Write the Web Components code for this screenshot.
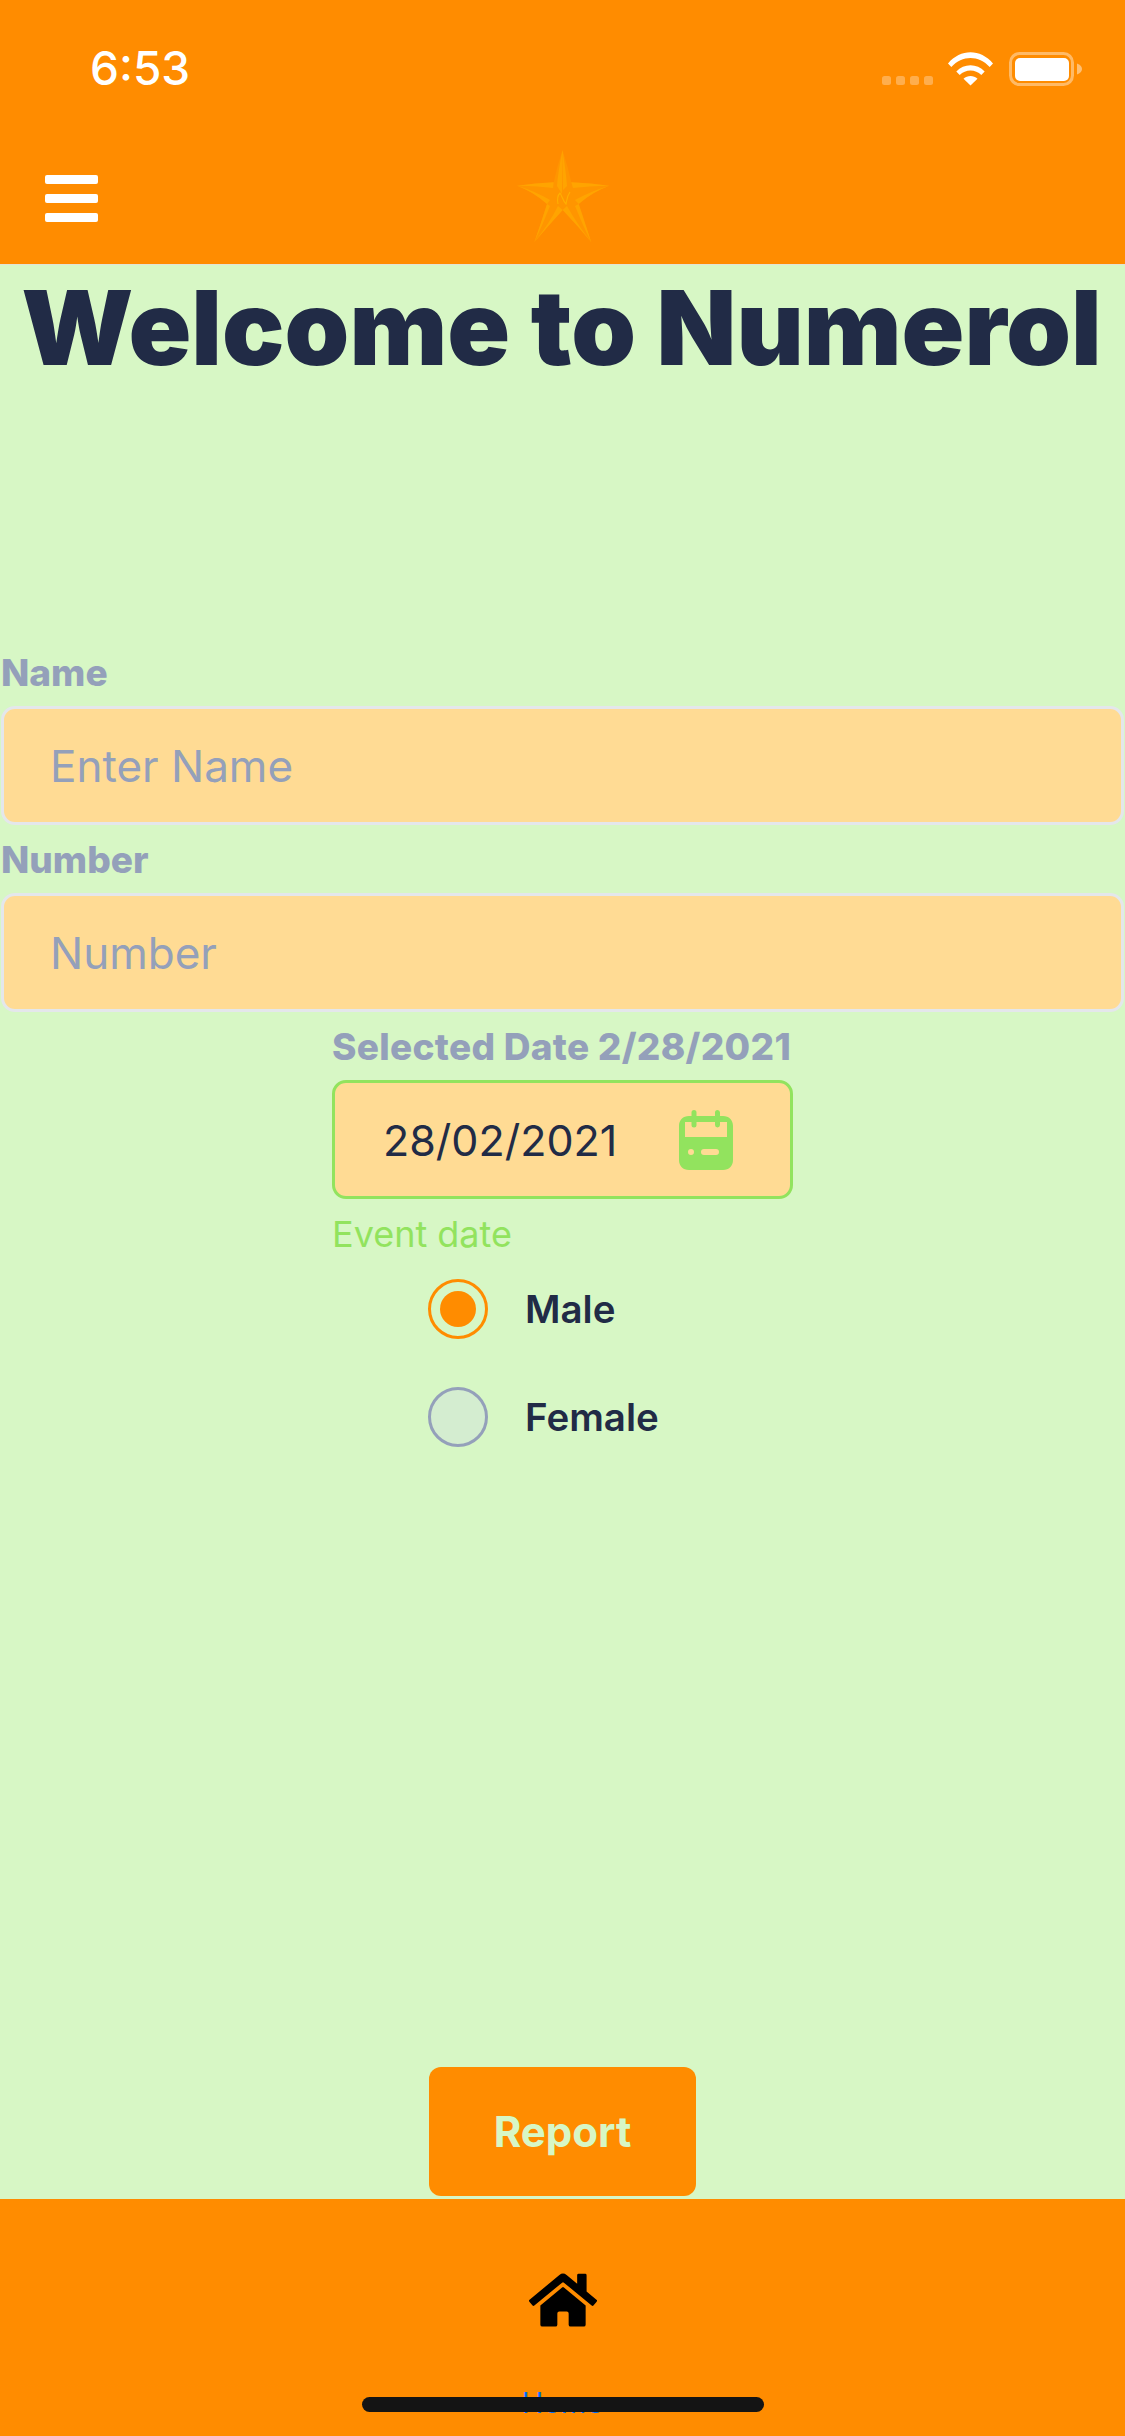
<!DOCTYPE html>
<html>
<head>
<meta charset="utf-8">
<title>Numerology</title>
<style>
	html, body { margin: 0; padding: 0; height: 100%; }
	body { font-family: Inter, "Noto Sans", sans-serif; background: #D7F7C5; }
</style>
</head>
<body>
<app-screen>
	<app-header slot="top">
		<span slot="time">6:53</span>
	</app-header>

	<welcome-title>Welcome to Numerol</welcome-title>

	<text-field>
		<span slot="label">Name</span>
		Enter Name
	</text-field>
	<text-field>
		<span slot="label">Number</span>
		Number
	</text-field>

	<date-field>
		<span slot="selected">Selected Date 2/28/2021</span>
		<span slot="value">28/02/2021</span>
		<span slot="helper">Event date</span>
	</date-field>

	<radio-group>
		<radio-option checked>Male</radio-option>
		<radio-option>Female</radio-option>
	</radio-group>

	<report-button slot="action">Report</report-button>

	<tab-bar slot="bottom">Home</tab-bar>
</app-screen>

<script>
	// page shell
	customElements.define('app-screen', class extends HTMLElement {
		constructor() {
			super();
			this.attachShadow({ mode: 'open' }).innerHTML = `
				<style>
					:host { display: flex; flex-direction: column; height: 2436px; overflow: hidden; }
					main { flex: 1; display: flex; flex-direction: column; min-height: 0; }
					.action { margin-top: auto; display: flex; justify-content: center; padding-bottom: 3px; }
				</style>
				<slot name="top"></slot>
				<main>
					<slot></slot>
					<div class="action"><slot name="action"></slot></div>
				</main>
				<slot name="bottom"></slot>`;
		}
	});

	// status bar + nav
	customElements.define('app-header', class extends HTMLElement {
		constructor() {
			super();
			this.attachShadow({ mode: 'open' }).innerHTML = `
				<style>
					:host { display: block; background: #FF8C00; border-bottom: 1px solid #e3e3d5; color: #fff; }
					.status { height: 132px; box-sizing: border-box; padding: 44px 43px 0 90px; display: flex; justify-content: space-between; align-items: flex-start; }
					.time { font-size: 46px; font-weight: 500; line-height: 48px; }
					.status svg { margin-top: 8px; display: block; }
					nav { height: 132px; display: flex; align-items: center; justify-content: center; position: relative; }
					.menu { position: absolute; left: 45px; top: 43px; display: block; }
					.logo { display: block; margin-top: -2px; }
				</style>
				<div class="status">
					<span class="time"><slot name="time"></slot></span>
					<svg width="200" height="36" viewBox="0 0 200 36">
						<g fill="#fff" fill-opacity=".3">
							<rect x="0" y="24" width="9" height="9" rx="2.5"/>
							<rect x="14" y="24" width="9" height="9" rx="2.5"/>
							<rect x="28" y="24" width="9" height="9" rx="2.5"/>
							<rect x="42" y="24" width="9" height="9" rx="2.5"/>
						</g>
						<path fill="#fff" d="M66 11.500C78.500 -3.500 98.500 -3.500 111 11.500L107.700 15C96.800 3 80.200 3 69.300 15Z"/>
						<path fill="#fff" d="M74.300 19.500C82 11 95 11 102.700 19.500L99.300 23C93.500 17 83.500 17 77.700 23Z"/>
						<path fill="#fff" d="M81.500 26.700C85.500 23 91.500 23 95.500 26.700L88.500 33.500Z"/>
						<rect x="128.500" y="1.500" width="62" height="31" rx="9" fill="none" stroke="#fff" stroke-opacity=".4" stroke-width="3"/>
						<rect x="133" y="6" width="54" height="23" rx="5" fill="#fff"/>
						<path fill="#fff" fill-opacity=".45" d="M195 11.500c3 1 5 3.200 5 5.500s-2 4.500-5 5.500Z"/>
					</svg>
				</div>
				<nav>
					<svg class="menu" width="53" height="47" viewBox="0 0 53 47" fill="#fff">
						<rect y="0" width="53" height="9" rx="2"/>
						<rect y="19" width="53" height="9" rx="2"/>
						<rect y="38" width="53" height="9" rx="2"/>
					</svg>
					<svg class="logo" width="94" height="94" viewBox="-1 0 94 94">
						<path fill="#FF9500" d="M45.500 0Q51 17 54.300 32.300Q74 33 92.300 35.700Q75 42 61.700 54Q68 73 74.300 92.300Q60 75 45.700 60Q32 75 17.300 92.300Q24 73 30 54Q17 42 0 35.700Q19 33 36.700 32.300Q40 17 45.500 0Z"/>
						<path fill="#FFA400" d="M36.700 32.300Q19 33 0 35.700Q22 36 36 38ZM54.300 32.300Q74 33 92.300 35.700Q71 36 56 38ZM45.500 0Q41 22 40 36L45 44ZM45.500 0Q49 22 50 36L46 40ZM45.700 60Q32 75 17.300 92.300Q32 74 41 56ZM45.700 60Q60 75 74.300 92.300Q60 74 50 56ZM30 54Q24 73 17.300 92.300Q26 74 33 56ZM61.700 54Q68 73 74.300 92.300Q65 74 58 56ZM0 35.700Q17 42 30 54L33 50Q18 41 0 35.700ZM92.300 35.700Q75 42 61.700 54L58 50Q74 41 92.300 35.700Z"/>
						<path fill="none" stroke="#FFB000" stroke-width="1.100" d="M41 54C40 49 41 45 43 43C45 46 46 51 49 54C50 50 50 46 53 42"/>
					</svg>
				</nav>`;
		}
	});

	customElements.define('welcome-title', class extends HTMLElement {
		constructor() {
			super();
			this.attachShadow({ mode: 'open' }).innerHTML = `
				<style>
					:host { display: block; height: 384px; padding-right: 2px; font-size: 103.700px; font-weight: 900; color: #212B46; white-space: nowrap; text-align: center; }
					div { line-height: 126px; overflow: hidden; }
				</style>
				<div><slot></slot></div>`;
		}
	});

	customElements.define('text-field', class extends HTMLElement {
		constructor() {
			super();
			this.attachShadow({ mode: 'open' }).innerHTML = `
				<style>
					:host { display: block; color: #94A0BA; padding-bottom: 11px; }
					label { display: block; font-size: 37px; font-weight: 800; line-height: 48px; margin-bottom: 9px; padding-left: 1px; }
					.box {
						height: 119px; box-sizing: border-box; margin: 0 1px; padding: 0 46px;
						display: flex; align-items: center;
						background: #FFDB94; border: 3px solid #E4E7EB; border-radius: 14px;
						font-size: 44px;
					}
				</style>
				<label><slot name="label"></slot></label>
				<div class="box"><slot></slot></div>`;
		}
	});

	customElements.define('date-field', class extends HTMLElement {
		constructor() {
			super();
			this.attachShadow({ mode: 'open' }).innerHTML = `
				<style>
					:host { display: block; width: 461px; margin: 0 auto; }
					.selected { font-size: 37px; font-weight: 800; letter-spacing: .3px; color: #94A0BA; line-height: 48px; white-space: nowrap; }
					.box {
						height: 119px; box-sizing: border-box; margin-top: 9px; padding: 0 57px 0 48px;
						display: flex; align-items: center; justify-content: space-between;
						background: #FFDB94; border: 3px solid #92E35E; border-radius: 14px;
						font-size: 43px; color: #212B46;
					}
					.helper { font-size: 36px; color: #92E35E; line-height: 48px; margin-top: 11px; }
				</style>
				<div class="selected"><slot name="selected"></slot></div>
				<div class="box">
					<slot name="value"></slot>
					<svg width="54" height="60" viewBox="0 0 54 60">
						<path fill="#92E35E" fill-rule="evenodd" d="M12.500 2.500a2.500 2.500 0 0 1 5 0V6h18.500V2.500a2.500 2.500 0 0 1 5 0V6h3c6 0 10 4 10 10v34c0 6-4 10-10 10H10C4 60 0 56 0 50V16C0 10 4 6 10 6h2.500ZM6 27h42V12h-7v3a2.500 2.500 0 0 1-5 0v-3H17.500v3a2.500 2.500 0 0 1-5 0v-3H6Zm9 15a3 3 0 1 0-6 0 3 3 0 0 0 6 0Zm10-3a3 3 0 0 0 0 6h12a3 3 0 0 0 0-6Z"/>
					</svg>
				</div>
				<div class="helper"><slot name="helper"></slot></div>`;
		}
	});

	customElements.define('radio-group', class extends HTMLElement {
		constructor() {
			super();
			this.attachShadow({ mode: 'open' }).innerHTML = `
				<style>
					:host { display: flex; flex-direction: column; gap: 48px; width: 461px; margin: 21px auto 0; padding-left: 96px; box-sizing: border-box; }
				</style>
				<slot></slot>`;
		}
	});

	customElements.define('radio-option', class extends HTMLElement {
		constructor() {
			super();
			this.attachShadow({ mode: 'open' }).innerHTML = `
				<style>
					:host { display: flex; align-items: center; gap: 37px; font-size: 38.500px; font-weight: 600; color: #212B46; white-space: nowrap; }
					.dot { width: 60px; height: 60px; box-sizing: border-box; border-radius: 50%; border: 3px solid #94A0BA; background: #D4EDD0; display: flex; align-items: center; justify-content: center; flex: none; }
					.dot i { width: 36px; height: 36px; border-radius: 50%; background: #FF8C00; display: none; }
					:host([checked]) .dot { border-color: #FF8C00; background: transparent; }
					:host([checked]) .dot i { display: block; }
				</style>
				<span class="dot"><i></i></span>
				<slot></slot>`;
		}
	});

	customElements.define('report-button', class extends HTMLElement {
		constructor() {
			super();
			this.attachShadow({ mode: 'open' }).innerHTML = `
				<style>
					:host { display: flex; width: 267px; height: 129px; align-items: center; justify-content: center; background: #FF8C00; border-radius: 12px; color: #D7F7C5; font-size: 42px; font-weight: 700; }
				</style>
				<slot></slot>`;
		}
	});

	customElements.define('tab-bar', class extends HTMLElement {
		constructor() {
			super();
			this.attachShadow({ mode: 'open' }).innerHTML = `
				<style>
					:host { display: flex; flex-direction: column; align-items: center; position: relative; height: 237px; box-sizing: border-box; padding-top: 71px; background: #FF8C00; }
					svg { display: block; }
					.label { margin-top: 53px; font-size: 29px; line-height: 40px; color: #0070FF; }
					.home { position: absolute; left: 362px; bottom: 24px; width: 402px; height: 15px; border-radius: 8px; background: #141414; }
				</style>
				<svg width="68" height="60.400" viewBox="0 0 576 512">
					<path d="M280.37 148.26L96 300.11V464a16 16 0 0 0 16 16l112.06-.29a16 16 0 0 0 15.92-16V368a16 16 0 0 1 16-16h64a16 16 0 0 1 16 16v95.64a16 16 0 0 0 16 16.05L464 480a16 16 0 0 0 16-16V300L295.67 148.26a12.19 12.19 0 0 0-15.3 0zM571.6 251.47L488 182.56V44.05a12 12 0 0 0-12-12h-56a12 12 0 0 0-12 12v72.61L318.47 43a48 48 0 0 0-61 0L4.34 251.47a12 12 0 0 0-1.6 16.9l25.5 31A12 12 0 0 0 45.15 301l235.22-193.74a12.19 12.19 0 0 1 15.3 0L530.9 301a12 12 0 0 0 16.9-1.6l25.5-31a12 12 0 0 0-1.7-16.93z"/>
				</svg>
				<span class="label"><slot></slot></span>
				<div class="home"></div>`;
		}
	});
</script>
</body>
</html>
